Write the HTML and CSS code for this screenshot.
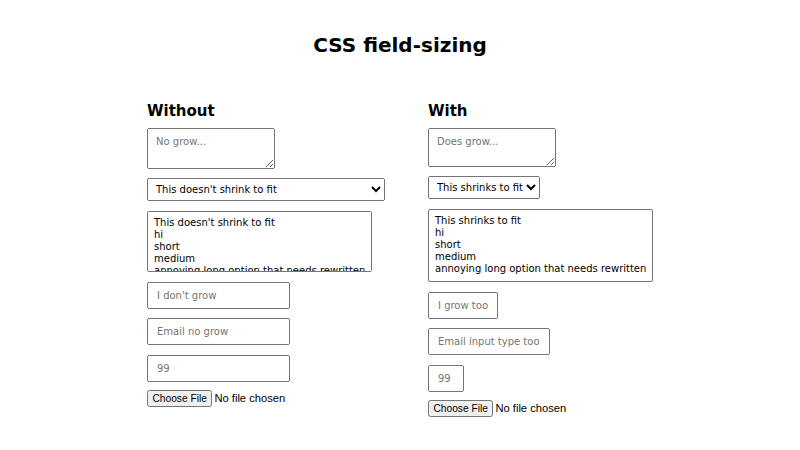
FILE: index.html
```html
<!DOCTYPE html>
<html>

<head>
    <meta charset="utf-8">
    <title>CSS field-sizing</title>

    <link rel="stylesheet" href="styles.css">
</head>

<body>

    <h1>CSS field-sizing</h1>

    <main class="columns">
        <section class="column without">
            <h2>Without</h2>

            <textarea placeholder="No grow..."></textarea>

            <select>
                <option>This doesn't shrink to fit</option>
                <option>hi</option>
                <option>short</option>
                <option>medium</option>
                <option>annoying long option that needs rewritten</option>
            </select>

            <select multiple>
                <option>This doesn't shrink to fit</option>
                <option>hi</option>
                <option>short</option>
                <option>medium</option>
                <option>annoying long option that needs rewritten</option>
            </select>

            <input type="text" placeholder="I don't grow">
            <input type="email" placeholder="Email no grow">
            <input type="number" placeholder="99">
            <input type="file">
        </section>

        <section class="column field-sizing">
            <h2>With</h2>

            <textarea placeholder="Does grow..."></textarea>

            <select>
                <option>This shrinks to fit</option>
                <option>hi</option>
                <option>short</option>
                <option>medium</option>
                <option>annoying long option that needs rewritten</option>
            </select>

            <select multiple>
                <option>This shrinks to fit</option>
                <option>hi</option>
                <option>short</option>
                <option>medium</option>
                <option>annoying long option that needs rewritten</option>
            </select>

            <input type="text" placeholder="I grow too">
            <input type="email" placeholder="Email input type too">
            <input type="number" placeholder="99">
            <input type="file">
        </section>
    </main>

</body>

</html>
```

FILE: styles.css
```css
body {
    font-family: "DejaVu Sans", sans-serif;
    margin: 0;
}

h1 {
    text-align: center;
    font-size: 20px;
    margin: 33px 0 0;
}

/* Columns */

.columns {
    display: flex;
    justify-content: center;
    gap: 56px;
    margin-top: 45px;
}

.column {
    display: flex;
    flex-direction: column;
    align-items: flex-start;
    gap: 9.7px;
    width: 225px;
}

.column h2 {
    font-size: 15px;
    margin: 0 0 -2.2px;
}

/* Fields */

textarea,
select,
input {
    font-family: inherit;
    font-size: 10px;
    box-sizing: border-box;
    margin: 0;
}

textarea {
    min-width: 128px;
    min-height: 39px;
    padding: 7px 8px;
}

.without textarea {
    width: 128px;
    height: 41px;
}

select {
    height: 23px;
    padding: 0 0 0 4px;
}

select[multiple] {
    height: auto;
    padding: 5.5px 4px;
}

select[multiple] option {
    padding: 0 2px;
}

input[type="text"],
input[type="email"],
input[type="number"] {
    height: 27px;
    padding: 0 8px;
}

.without input[type="text"],
.without input[type="email"],
.without input[type="number"] {
    width: 143px;
}

input[type="file"] {
    font-family: "Liberation Sans", Arial, sans-serif;
    font-size: 11.2px;
    line-height: 15px;
    margin-top: -1.5px;
}

input[type="file"]::file-selector-button {
    font-size: 10.2px;
    padding: 1px 3.5px;
    margin-right: 2px;
}

.field-sizing textarea,
.field-sizing select,
.field-sizing input {
    field-sizing: content;
}
```
